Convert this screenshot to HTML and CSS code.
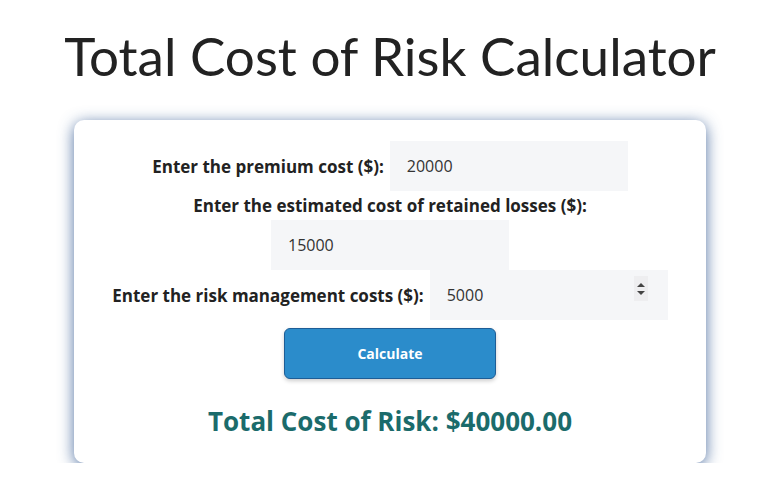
FILE: index.html
```html
<!DOCTYPE html>
<html lang="en">
<head>
  <meta charset="UTF-8">
  <meta name="viewport" content="width=device-width, initial-scale=1.0">
  <title>Total Cost of Risk Calculator</title>
  <link rel="stylesheet" href="styles.css">
</head>
<body>
  <h1>Total Cost of Risk Calculator</h1>
  <div class="calculator">
    <div class="form-row">
      <label for="premium">Enter the premium cost ($):</label>
      <input type="text" id="premium" value="20000">
    </div>
    <div class="form-row">
      <label for="losses">Enter the estimated cost of retained losses ($):</label>
      <input type="text" id="losses" value="15000">
    </div>
    <div class="form-row">
      <label for="management">Enter the risk management costs ($):</label>
      <span class="number-field">
        <input type="text" id="management" value="5000">
        <span class="spinner"><i class="up"></i><i class="down"></i></span>
      </span>
    </div>
    <button class="calc-btn" onclick="calculate()">Calculate</button>
    <h2 class="result" id="result">Total Cost of Risk: $40000.00</h2>
  </div>

  <script>
    function calculate() {
      const premium = parseFloat(document.getElementById('premium').value) || 0;
      const losses = parseFloat(document.getElementById('losses').value) || 0;
      const management = parseFloat(document.getElementById('management').value) || 0;
      const total = premium + losses + management;
      document.getElementById('result').textContent = 'Total Cost of Risk: $' + total.toFixed(2);
    }
  </script>
</body>
</html>
```

FILE: styles.css
```css
* {
  box-sizing: border-box;
}

body {
  margin: 0;
  padding-left: 12px;
  font-family: "Open Sans", Arial, sans-serif;
  background-color: #fff;
  color: #222;
}

h1 {
  margin: 18px 0 26px;
  font-family: Lato, "Open Sans", sans-serif;
  font-size: 53px;
  line-height: 76px;
  font-weight: normal;
  text-align: center;
  color: #222;
}

.calculator {
  width: 632px;
  margin: 0 auto;
  padding: 21px 20px 26px;
  background-color: #fff;
  border-radius: 10px;
  box-shadow: 0 3px 15px rgba(40, 80, 140, 0.8);
  text-align: center;
}

.form-row {
  display: flex;
  flex-wrap: wrap;
  justify-content: center;
  align-items: center;
  column-gap: 6px;
}

.form-row label {
  font-weight: bold;
  font-size: 17px;
  line-height: 29px;
}

.form-row input {
  width: 238px;
  height: 50px;
  padding: 0 17px;
  border: none;
  background-color: #f5f6f8;
  font-family: inherit;
  font-size: 16px;
  color: #333;
}

.number-field {
  position: relative;
  display: inline-block;
}

.spinner {
  position: absolute;
  right: 20px;
  top: 6px;
  width: 14px;
  height: 25px;
  background-color: #eeeef0;
}

.spinner i {
  position: absolute;
  left: 3px;
  border-left: 4px solid transparent;
  border-right: 4px solid transparent;
}

.spinner .up {
  top: 7px;
  border-bottom: 4px solid #444;
}

.spinner .down {
  top: 15px;
  border-top: 4px solid #444;
}

.calc-btn {
  margin-top: 8px;
  width: 212px;
  height: 51px;
  background-color: #2b8ccb;
  color: #fff;
  border: 1px solid #1d5d96;
  border-radius: 6px;
  box-shadow: 0 2px 4px rgba(0, 0, 0, 0.2);
  font-family: inherit;
  font-size: 14px;
  font-weight: bold;
  cursor: pointer;
}

.calc-btn:hover {
  background-color: #2378b0;
}

.result {
  margin: 26px 0 0;
  font-size: 26px;
  line-height: 32px;
  color: #1b6b6b;
}
```
